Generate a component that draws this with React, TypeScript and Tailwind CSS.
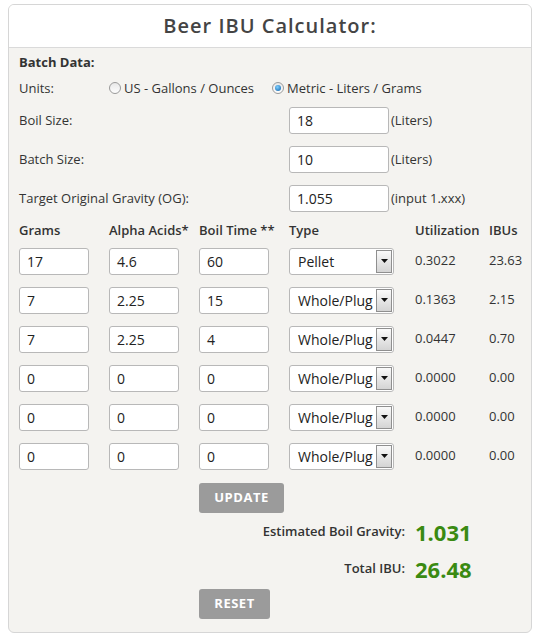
import React from 'react';

const hops = [
  { grams: '17', alpha: '4.6', time: '60', type: 'Pellet', util: '0.3022', ibu: '23.63' },
  { grams: '7', alpha: '2.25', time: '15', type: 'Whole/Plug', util: '0.1363', ibu: '2.15' },
  { grams: '7', alpha: '2.25', time: '4', type: 'Whole/Plug', util: '0.0447', ibu: '0.70' },
  { grams: '0', alpha: '0', time: '0', type: 'Whole/Plug', util: '0.0000', ibu: '0.00' },
  { grams: '0', alpha: '0', time: '0', type: 'Whole/Plug', util: '0.0000', ibu: '0.00' },
  { grams: '0', alpha: '0', time: '0', type: 'Whole/Plug', util: '0.0000', ibu: '0.00' },
];

function TextBox({ value, className = '' }: { readonly value: string; readonly className?: string }) {
  return (
    <div
      className={`flex h-[27px] items-center rounded-[3px] border border-[#b8b8b8] bg-white pl-[7px] text-[14px] text-[#222] ${className}`}
    >
      {value}
    </div>
  );
}

function Radio({ checked }: { readonly checked?: boolean }) {
  return (
    <span className="flex h-[12px] w-[12px] items-center justify-center rounded-full border border-[#9a9a9a] bg-[linear-gradient(180deg,#e8e8e8,#fdfdfd)]">
      {checked ? (
        <span className="h-[6px] w-[6px] rounded-full bg-[radial-gradient(circle_at_40%_35%,#7fd0ff,#0b5ea8)]" />
      ) : null}
    </span>
  );
}

function SelectBox({ value }: { readonly value: string }) {
  return (
    <div className="flex h-[27px] w-[105px] items-center rounded-[3px] border border-[#b8b8b8] bg-white text-[14px] text-[#222]">
      <span className="flex-1 pl-[8px]">{value}</span>
      <span className="mr-[1px] flex h-[23px] w-[16px] items-center justify-center border border-[#8f8f8f] bg-[linear-gradient(180deg,#fafafa,#d4d4d4)]">
        <svg width="7" height="4" viewBox="0 0 7 4">
          <path d="M0 0h7L3.5 4z" fill="#111" />
        </svg>
      </span>
    </div>
  );
}

function GrayButton({ label, className = '' }: { readonly label: string; readonly className?: string }) {
  return (
    <div
      className={`flex h-[30px] items-center justify-center rounded-[3px] bg-[#9b9b9b] text-[13px] font-bold tracking-[0.04em] text-white ${className}`}
    >
      {label}
    </div>
  );
}

export default function App() {
  return (
    <div className="min-h-[635px] bg-white pt-[4px] font-['Open_Sans',sans-serif] text-[13px] text-[#333]">
      <div className="mx-[8px] w-[524px] overflow-hidden rounded-[6px] border border-[#d6d6d6] bg-[#f4f3f0]">
        <div className="flex h-[43px] items-center justify-center border-b border-[#dadada] bg-white">
          <h1 className="text-[20px] font-semibold tracking-[0.05em] text-[#444]">Beer IBU Calculator:</h1>
        </div>

        <div className="px-[10px] pb-[13px]">
          <p className="pt-[5px] font-bold text-[#333]">Batch Data:</p>

          <div className="mt-[6px] flex items-center">
            <span className="w-[90px]">Units:</span>
            <span className="flex items-center gap-[3px]">
              <Radio />
              <span>US - Gallons / Ounces</span>
            </span>
            <span className="ml-[18px] flex items-center gap-[3px]">
              <Radio checked />
              <span>Metric - Liters / Grams</span>
            </span>
          </div>

          <div className="mt-[9px] grid grid-cols-[270px_100px_1fr] items-center gap-y-[12px]">
            <span>Boil Size:</span>
            <TextBox value="18" />
            <span className="pl-[2px]">(Liters)</span>

            <span>Batch Size:</span>
            <TextBox value="10" />
            <span className="pl-[2px]">(Liters)</span>

            <span>Target Original Gravity (OG):</span>
            <TextBox value="1.055" />
            <span className="pl-[2px]">(input 1.xxx)</span>
          </div>

          <div className="mt-[9px] grid grid-cols-[90px_90px_90px_126px_74px_1fr] font-semibold">
            <span>Grams</span>
            <span>Alpha Acids*</span>
            <span>Boil Time **</span>
            <span>Type</span>
            <span>Utilization</span>
            <span>IBUs</span>
          </div>

          <div className="mt-[7px] grid grid-cols-[90px_90px_90px_126px_74px_1fr] items-center gap-y-[12px]">
            {hops.map((hop, i) => (
              <React.Fragment key={i}>
                <TextBox value={hop.grams} className="w-[70px]" />
                <TextBox value={hop.alpha} className="w-[70px]" />
                <TextBox value={hop.time} className="w-[70px]" />
                <SelectBox value={hop.type} />
                <span>{hop.util}</span>
                <span>{hop.ibu}</span>
              </React.Fragment>
            ))}
          </div>

          <div className="ml-[180px] mt-[13px]">
            <GrayButton label="UPDATE" className="w-[85px]" />
          </div>

          <div className="mt-[2px] grid grid-cols-[386px_1fr] items-center gap-x-[10px] gap-y-[3px]">
            <span className="text-right font-semibold">Estimated Boil Gravity:</span>
            <span className="text-[22px] font-bold leading-[34px] text-[#3a8a12]">1.031</span>
            <span className="text-right font-semibold">Total IBU:</span>
            <span className="text-[22px] font-bold leading-[34px] text-[#3a8a12]">26.48</span>
          </div>

          <div className="ml-[180px] mt-[3px]">
            <GrayButton label="RESET" className="w-[71px]" />
          </div>
        </div>
      </div>
    </div>
  );
}
